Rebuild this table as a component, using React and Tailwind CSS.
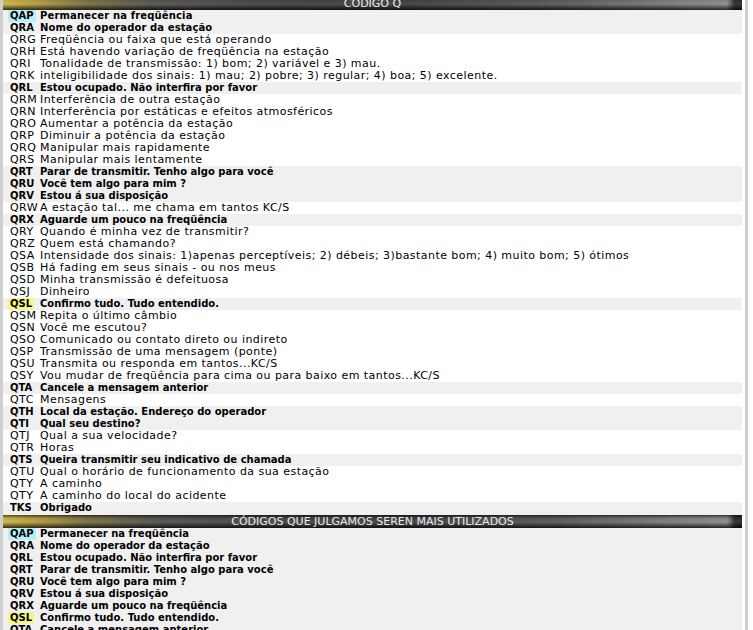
import React from "react";

const rows1 = [
  ["QAP", "Permanecer na freqüência", true, "cyan", "tracking-[0.15px]"],
  ["QRA", "Nome do operador da estação", true, null, "tracking-[0.1px]"],
  ["QRG", "Freqüência ou faixa que está operando"],
  ["QRH", "Está havendo variação de freqüência na estação"],
  ["QRI", "Tonalidade de transmissão: 1) bom; 2) variável e 3) mau."],
  ["QRK", "inteligibilidade dos sinais: 1) mau; 2) pobre; 3) regular; 4) boa; 5) excelente."],
  ["QRL", "Estou ocupado. Não interfira por favor", true],
  ["QRM", "Interferência de outra estação"],
  ["QRN", "Interferência por estáticas e efeitos atmosféricos"],
  ["QRO", "Aumentar a potência da estação"],
  ["QRP", "Diminuir a potência da estação"],
  ["QRQ", "Manipular mais rapidamente"],
  ["QRS", "Manipular mais lentamente"],
  ["QRT", "Parar de transmitir. Tenho algo para você", true],
  ["QRU", "Você tem algo para mim ?", true],
  ["QRV", "Estou á sua disposição", true],
  ["QRW", "A estação tal... me chama em tantos KC/S"],
  ["QRX", "Aguarde um pouco na freqüência", true],
  ["QRY", "Quando é minha vez de transmitir?"],
  ["QRZ", "Quem está chamando?"],
  ["QSA", "Intensidade dos sinais: 1)apenas perceptíveis; 2) débeis; 3)bastante bom; 4) muito bom; 5) ótimos"],
  ["QSB", "Há fading em seus sinais - ou nos meus"],
  ["QSD", "Minha transmissão é defeituosa"],
  ["QSJ", "Dinheiro"],
  ["QSL", "Confirmo tudo. Tudo entendido.", true, "yellow"],
  ["QSM", "Repita o último câmbio"],
  ["QSN", "Você me escutou?"],
  ["QSO", "Comunicado ou contato direto ou indireto"],
  ["QSP", "Transmissão de uma mensagem (ponte)"],
  ["QSU", "Transmita ou responda em tantos...KC/S"],
  ["QSY", "Vou mudar de freqüência para cima ou para baixo em tantos...KC/S"],
  ["QTA", "Cancele a mensagem anterior", true],
  ["QTC", "Mensagens"],
  ["QTH", "Local da estação. Endereço do operador", true],
  ["QTI", "Qual seu destino?", true],
  ["QTJ", "Qual a sua velocidade?"],
  ["QTR", "Horas"],
  ["QTS", "Queira transmitir seu indicativo de chamada", true],
  ["QTU", "Qual o horário de funcionamento da sua estação"],
  ["QTY", "A caminho"],
  ["QTY", "A caminho do local do acidente"],
  ["TKS", "Obrigado", true],
];

const rows2 = [
  ["QAP", "Permanecer na freqüência", true, "cyan"],
  ["QRA", "Nome do operador da estação", true],
  ["QRL", "Estou ocupado. Não interfira por favor", true],
  ["QRT", "Parar de transmitir. Tenho algo para você", true],
  ["QRU", "Você tem algo para mim ?", true],
  ["QRV", "Estou á sua disposição", true],
  ["QRX", "Aguarde um pouco na freqüência", true],
  ["QSL", "Confirmo tudo. Tudo entendido.", true, "yellow"],
  ["QTA", "Cancele a mensagem anterior", true],
];

function Row({ code, text, bold, hl, extra, gray }) {
  const bg = gray || bold ? "bg-[#f0f0f0]" : "bg-white";
  const hlc = hl === "cyan" ? "bg-[#b4f0f8]" : hl === "yellow" ? "bg-[#f6f68c]" : "";
  return (
    <div
      className={`flex h-[12px] items-stretch pl-[5px] leading-[12px] text-black whitespace-nowrap ${bg} ${
        bold ? "font-bold text-[10px]" : "font-normal text-[11px] tracking-[0.45px]"
      }`}
    >
      <div className="w-[32px] flex">
        <span className={`px-[2px] ${hlc}`}>{code}</span>
      </div>
      <span className={extra || ""}>{text}</span>
    </div>
  );
}

function Header({ title, cls }) {
  return (
    <div
      className={`h-[13px] flex items-center justify-center text-[11px] leading-[13px] text-[#ececec] bg-[linear-gradient(to_bottom,rgba(0,0,0,0.6)_0%,rgba(0,0,0,0.05)_25%,rgba(255,255,255,0.05)_55%,rgba(0,0,0,0.75)_100%),linear-gradient(to_right,#cbb84c_0%,#b09a40_5%,#7c7346_11%,#575550_20%,#464646_35%,#414141_55%,#5a5a5a_75%,#7c7c7c_90%,#8c8c8c_98%,#2e2e2e_99%)] ${cls}`}
    >
      {title}
    </div>
  );
}

export default function App() {
  return (
    <div className="w-[753px] h-[630px] overflow-hidden bg-white flex font-['DejaVu_Sans',sans-serif]">
      <div className="w-[748px] border-l-[3px] border-r-[3px] border-[#cfcfcf] bg-white flex flex-col">
        <Header title="CÓDIGO Q" cls="mt-[-3px] mr-[3px]" />
        <div className="h-[1px] bg-[#f0f0f0] mr-[3px]" />
        <div className="mr-[3px] flex flex-col">
          {rows1.map((r, i) => (
            <Row key={i} code={r[0]} text={r[1]} bold={r[2]} hl={r[3]} extra={r[4]} />
          ))}
        </div>
        <div className="mr-[3px] bg-[#f0f0f0] pt-[1px] flex flex-col">
          <Header title="CÓDIGOS QUE JULGAMOS SEREN MAIS UTILIZADOS" cls="" />
          {rows2.map((r, i) => (
            <Row key={i} code={r[0]} text={r[1]} bold={r[2]} hl={r[3]} extra={r[4]} gray />
          ))}
        </div>
      </div>
    </div>
  );
}
